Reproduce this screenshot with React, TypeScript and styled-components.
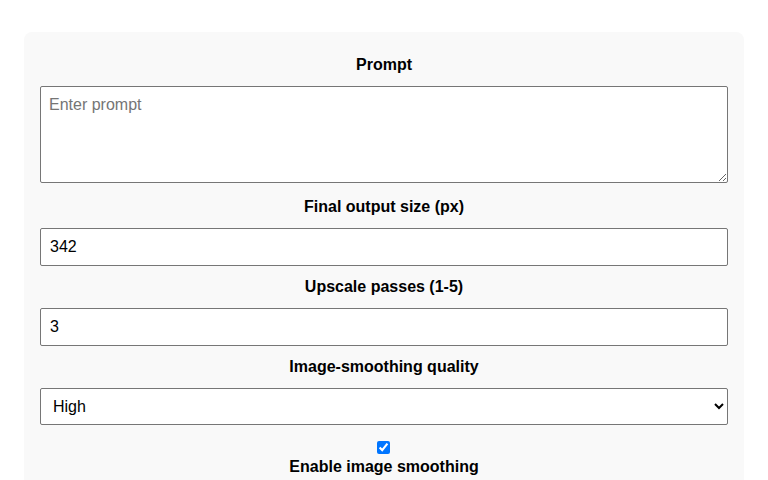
import React from "react";
import styled, { createGlobalStyle } from "styled-components";

const GlobalStyle = createGlobalStyle`
	body {
		margin: 0;
		background: #ffffff;
		font-family: "Liberation Sans", Arial, sans-serif;
	}
`;

const Page = styled.div`
	padding: 32px 24px;
`;

const Card = styled.form`
	display: flex;
	flex-direction: column;
	align-items: stretch;
	background: #f9f9f9;
	border-radius: 8px;
	padding: 23px 16px 24px;
`;

const Label = styled.label`
	display: block;
	text-align: center;
	font-size: 16px;
	font-weight: 700;
	line-height: 18px;
	color: #000;
	padding-top: 1px;
	margin-bottom: 12px;
`;

const fieldBase = `
	display: block;
	box-sizing: border-box;
	width: 100%;
	border: 1px solid #767676;
	border-radius: 2px;
	background: #fff;
	font-family: "Liberation Sans", Arial, sans-serif;
	font-size: 16px;
	color: #000;
	padding: 0 9px;
`;

const TextArea = styled.textarea`
	${fieldBase}
	height: 97px;
	padding: 9px 8px 8px;
	resize: vertical;
	margin-bottom: 14px;

	&::placeholder {
		color: #757575;
	}
`;

const Input = styled.input<{ $gap: number }>`
	${fieldBase}
	height: 38px;
	margin-bottom: ${p => p.$gap}px;
`;

const Select = styled.select`
	${fieldBase}
	height: 37px;
	padding: 0 8px;
	margin-bottom: 16px;
`;

const CheckRow = styled.div`
	display: flex;
	flex-direction: column;
	align-items: center;
	row-gap: 3px;

	input {
		margin: 0 1px 0 0;
		width: 13px;
		height: 13px;
	}
`;

const App = () => {
	return (
		<Page>
			<GlobalStyle />
			<Card onSubmit={e => e.preventDefault()}>
				<Label htmlFor="prompt">Prompt</Label>
				<TextArea id="prompt" placeholder="Enter prompt" />

				<Label htmlFor="size">Final output size (px)</Label>
				<Input id="size" type="number" defaultValue={342} $gap={11} />

				<Label htmlFor="passes">Upscale passes (1-5)</Label>
				<Input id="passes" type="number" defaultValue={3} $gap={11} />

				<Label htmlFor="quality">Image-smoothing quality</Label>
				<Select id="quality" defaultValue="high">
					<option value="low">Low</option>
					<option value="medium">Medium</option>
					<option value="high">High</option>
				</Select>

				<CheckRow>
					<input id="smoothing" type="checkbox" defaultChecked />
					<Label htmlFor="smoothing">Enable image smoothing</Label>
				</CheckRow>
			</Card>
		</Page>
	);
};

export default App;
